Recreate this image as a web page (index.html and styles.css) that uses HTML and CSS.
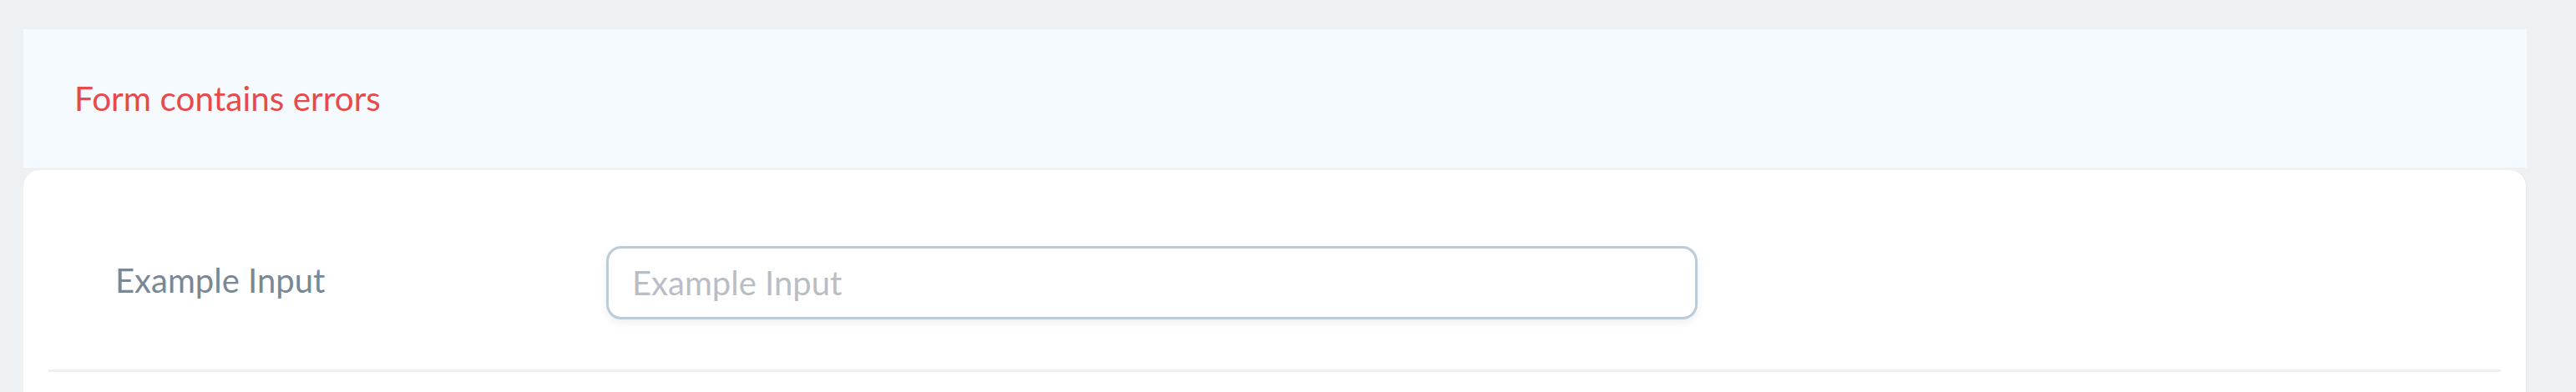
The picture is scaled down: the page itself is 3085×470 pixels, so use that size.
FILE: index.html
```html
<!DOCTYPE html>
<html lang="en">
<head>
<meta charset="utf-8">
<title>Form</title>
<link rel="stylesheet" href="styles.css">
</head>
<body>
<div class="page">
  <div class="alert"><p class="alert-text">Form contains errors</p></div>
  <div class="card">
    <div class="form-row">
      <label class="label" for="example">Example Input</label>
      <input class="input" id="example" type="text" placeholder="Example Input">
    </div>
    <div class="divider"></div>
  </div>
</div>
</body>
</html>
```
FILE: styles.css
```css
html, body {
  margin: 0;
  height: 100%;
}
body {
  background: #edf1f4;
  font-family: Lato, "Open Sans", sans-serif;
  overflow: hidden;
}
.page {
  box-sizing: border-box;
  height: 100%;
  padding: 35px 59px 0 28px;
  display: flex;
  flex-direction: column;
  gap: 3px;
}
.alert {
  box-sizing: border-box;
  height: 166px;
  flex: none;
  background: #f5faff;
  display: flex;
  align-items: center;
}
.alert-text {
  margin: 0 0 0 61px;
  color: #e84a4c;
  font-size: 40.5px;
  line-height: 1.2;
}
.card {
  flex: 1;
  background: #ffffff;
  border-radius: 20px 20px 0 0;
  border-right: 1px solid #e3e7eb;
  padding: 0 30px;
}
.form-row {
  display: flex;
  align-items: center;
  padding: 91px 0 60px 0;
}
.label {
  box-sizing: border-box;
  width: 668px;
  flex: none;
  padding-left: 80px;
  margin-bottom: 6px;
  font-size: 40px;
  color: #7a8794;
}
.input {
  box-sizing: border-box;
  width: 1307px;
  height: 88px;
  border: 3px solid #bccbd8;
  border-radius: 18px;
  padding: 0 28px;
  font-family: Lato, "Open Sans", sans-serif;
  font-size: 40px;
  color: #495057;
  background: #fff;
  box-shadow: 0 4px 10px rgba(30, 50, 80, 0.08);
  outline: none;
}
.input::placeholder {
  color: #b9bec6;
}
.divider {
  margin: 0;
  height: 3px;
  background: #edf0f3;
}
```
